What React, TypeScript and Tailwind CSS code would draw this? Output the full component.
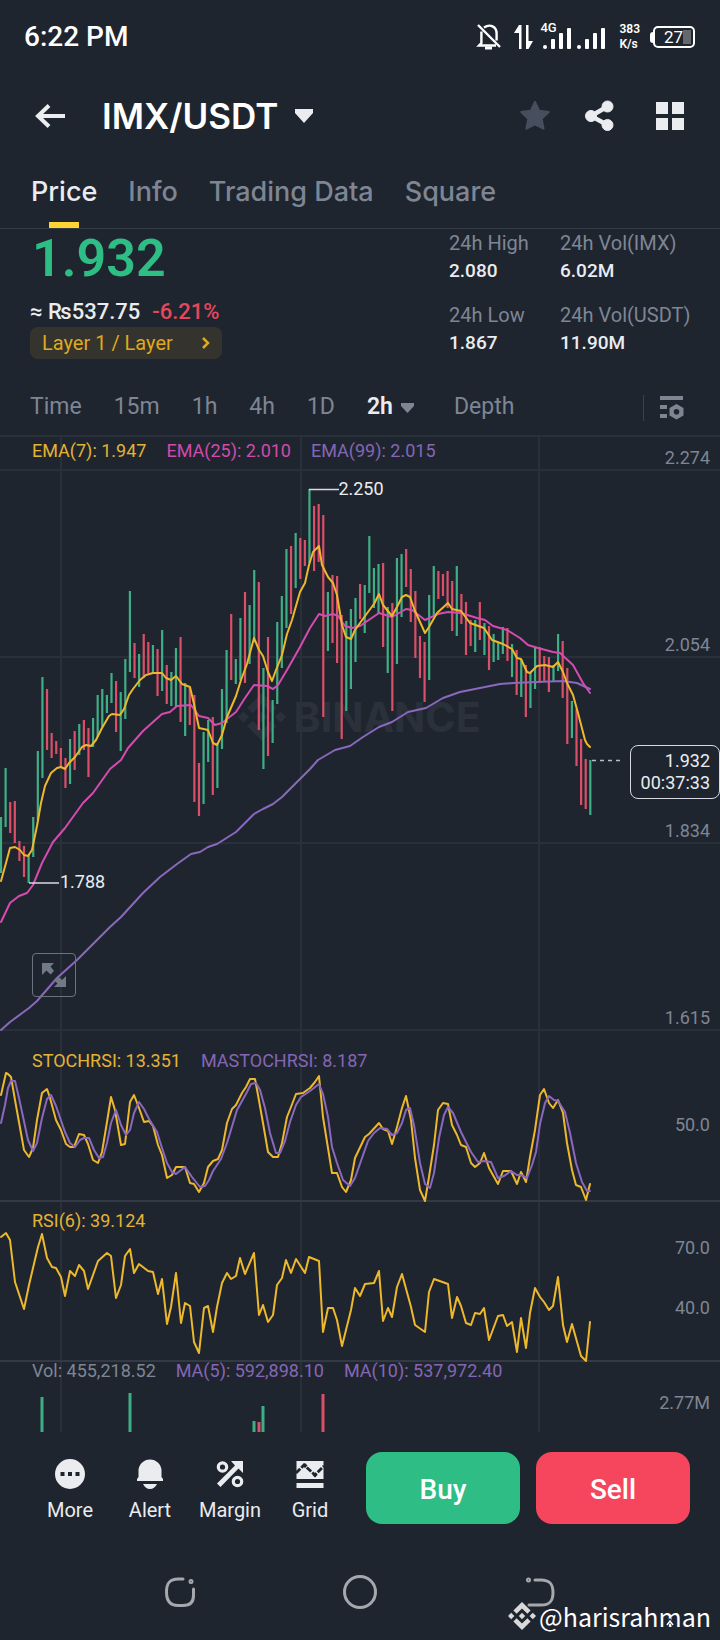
import React from "react";

const GREEN = "#3fae86";
const RED = "#db5068";
const YELLOW = "#edb82c";
const PINK = "#d64bb0";
const PURPLE = "#8a68bd";

type Candle = [high: number, low: number, up: 0 | 1];

const candles: Candle[] = [
  [817, 873, 1], [768, 827, 1], [802, 833, 0], [801, 843, 0], [841, 861, 0], [846, 877, 0], [855, 883, 1], [817, 857, 1],
  [751, 820, 1], [677, 778, 1], [689, 750, 0], [733, 758, 0], [741, 754, 0], [748, 767, 0], [758, 788, 0], [739, 784, 1],
  [731, 770, 0], [724, 755, 1], [720, 750, 0], [728, 777, 0], [718, 747, 1], [695, 737, 1], [689, 727, 1], [695, 713, 1],
  [673, 703, 1], [681, 732, 0], [692, 751, 1], [659, 719, 1], [591, 672, 1], [643, 678, 0], [654, 687, 1], [634, 678, 0],
  [642, 673, 0], [645, 673, 1], [649, 696, 0], [630, 691, 1], [665, 704, 0], [672, 706, 1], [648, 707, 1], [637, 722, 0],
  [683, 736, 1], [688, 725, 0], [695, 802, 0], [763, 816, 0], [732, 804, 1], [720, 762, 1], [717, 795, 0], [743, 788, 1],
  [689, 749, 1], [650, 723, 1], [614, 680, 0], [659, 684, 1], [618, 680, 1], [592, 683, 0], [605, 664, 1], [570, 638, 1],
  [582, 730, 0], [668, 769, 1], [637, 756, 0], [700, 743, 1], [622, 704, 1], [596, 668, 1], [549, 628, 1], [546, 614, 0],
  [533, 588, 1], [538, 579, 0], [540, 566, 0], [489, 563, 1], [506, 571, 0], [504, 562, 0], [515, 717, 0], [592, 651, 1],
  [575, 643, 0], [576, 663, 0], [615, 739, 0], [621, 711, 1], [609, 689, 1], [598, 662, 1], [584, 619, 0], [585, 633, 1],
  [536, 593, 1], [568, 608, 1], [564, 613, 1], [563, 647, 0], [607, 673, 1], [603, 711, 0], [558, 664, 1], [554, 617, 1],
  [549, 587, 0], [569, 622, 0], [591, 658, 0], [636, 678, 0], [642, 702, 0], [595, 680, 1], [566, 617, 1], [571, 599, 0],
  [574, 596, 0], [571, 608, 0], [581, 631, 0], [566, 636, 1], [594, 624, 0], [602, 655, 0], [620, 646, 0], [620, 652, 1],
  [602, 640, 0], [623, 655, 1], [626, 670, 0], [634, 662, 1], [642, 660, 1], [627, 654, 1], [628, 661, 0], [644, 677, 1],
  [650, 695, 0], [659, 697, 1], [665, 717, 0], [673, 708, 1], [648, 689, 1], [647, 683, 0], [656, 682, 0], [657, 692, 0],
  [665, 681, 1], [634, 671, 1], [641, 698, 0], [668, 744, 0], [701, 738, 1], [709, 766, 0], [739, 805, 0], [759, 809, 0],
  [760, 815, 1],
];

const ema7 =
  "1,881 6,863 10,848 15,847 20,850 24,855 28,856 32,850 37,826 41,803 45,786 51,773 57,768 61,767 65,769 69,763 75,757 82,747 86,745 91,746 96,740 102,728 109,716 112,714 120,715 124,709 129,695 133,689 140,680 146,675 153,673 162,673 166,678 171,680 176,676 182,684 190,687 194,704 199,728 208,730 213,743 217,745 222,735 227,717 236,696 241,680 247,664 254,638 259,650 263,656 268,672 272,681 276,670 282,655 287,634 292,620 300,592 305,583 309,565 313,552 319,546 322,565 328,577 333,583 337,595 342,625 346,637 351,639 355,630 360,623 368,612 374,604 379,594 383,605 392,616 397,607 402,597 406,595 410,597 415,611 425,633 429,627 437,613 448,603 452,609 461,611 470,623 484,628 492,640 503,644 512,649 517,658 521,659 527,672 530,673 537,666 545,665 553,667 558,662 563,672 567,683 573,695 578,713 585,740 587,744 590,747";
const ema25 =
  "1,922 10,903 19,896 27,893 33,885 42,863 53,842 65,828 83,803 93,793 110,769 121,760 128,748 143,731 162,714 170,712 177,706 191,705 199,716 208,718 215,725 222,723 236,712 245,698 254,685 267,686 273,689 278,685 287,670 300,647 310,628 319,614 325,616 333,614 338,616 345,626 352,628 360,626 379,613 392,617 406,609 412,610 425,620 438,614 448,612 461,613 477,618 485,620 493,626 507,630 520,638 528,645 538,648 553,652 560,653 573,665 583,683 590,693";
const ema99 =
  "1,1030 10,1022 29,1008 37,1001 57,978 77,960 93,944 110,927 121,917 143,893 160,877 177,864 191,854 200,852 208,847 217,844 236,832 254,814 263,809 273,804 282,797 300,779 310,769 318,760 335,750 350,746 363,737 379,727 392,722 408,712 426,708 443,698 460,692 480,688 500,684 513,683 537,682 563,681 577,683 590,689";
const stoch =
  "1,1095 6,1073 8,1074 11,1077 15,1100 24,1150 29,1157 33,1148 37,1120 42,1093 47,1089 50,1098 56,1120 61,1130 66,1144 70,1147 74,1147 79,1134 84,1135 88,1144 93,1160 98,1163 102,1152 107,1122 111,1097 115,1110 121,1145 125,1144 130,1102 134,1095 139,1108 144,1122 149,1121 153,1126 158,1145 162,1155 167,1178 172,1175 176,1167 185,1167 190,1183 194,1184 199,1192 204,1183 208,1167 213,1161 218,1159 222,1150 227,1123 232,1109 236,1105 242,1093 246,1087 250,1079 255,1079 258,1095 263,1123 268,1152 273,1157 278,1157 282,1143 287,1117 291,1107 296,1094 303,1093 310,1088 315,1082 319,1076 323,1117 332,1173 337,1173 342,1187 346,1192 351,1180 355,1158 365,1137 369,1134 379,1123 383,1129 388,1131 392,1144 397,1127 402,1108 406,1096 411,1120 415,1158 420,1190 425,1201 429,1177 434,1145 438,1110 443,1103 448,1104 452,1125 457,1135 461,1145 466,1147 471,1163 475,1167 480,1163 484,1153 489,1168 498,1184 503,1171 511,1171 517,1184 521,1172 526,1182 530,1157 535,1130 540,1095 544,1089 549,1103 553,1108 558,1100 563,1113 567,1143 572,1170 576,1185 581,1187 586,1200 590,1184";
const stochMa =
  "1,1123 5,1105 8,1088 11,1081 15,1081 19,1098 28,1140 33,1151 37,1143 42,1118 47,1099 51,1095 56,1106 65,1132 70,1143 75,1147 80,1140 84,1138 89,1138 94,1150 99,1158 103,1157 107,1143 111,1123 116,1110 121,1125 126,1135 130,1130 134,1113 139,1102 144,1109 149,1119 157,1132 162,1148 167,1163 172,1172 176,1174 185,1167 192,1177 200,1187 205,1186 209,1180 213,1171 221,1159 227,1143 237,1110 247,1092 251,1084 256,1083 260,1090 265,1108 270,1133 276,1153 280,1153 285,1141 290,1122 296,1105 301,1097 310,1091 319,1084 323,1094 328,1117 332,1147 337,1163 343,1180 350,1186 355,1178 362,1158 368,1141 374,1133 380,1128 387,1129 392,1135 397,1133 402,1123 406,1110 410,1108 414,1125 420,1163 425,1184 430,1188 434,1173 439,1138 444,1115 448,1107 453,1113 461,1132 471,1152 478,1162 484,1161 491,1162 498,1178 504,1176 511,1171 517,1175 521,1175 527,1178 532,1165 536,1152 540,1124 545,1103 549,1096 554,1100 558,1101 565,1112 570,1133 576,1163 582,1182 587,1191 590,1191";
const rsi =
  "1,1237 6,1233 10,1240 15,1282 19,1294 24,1309 29,1285 38,1247 42,1234 47,1258 52,1267 56,1268 61,1277 65,1296 70,1271 75,1276 79,1265 84,1271 88,1289 98,1261 107,1253 111,1256 116,1298 121,1285 125,1256 130,1249 134,1273 139,1264 148,1271 153,1272 158,1294 162,1279 167,1324 171,1307 176,1273 181,1323 185,1303 190,1306 194,1342 199,1353 204,1308 208,1306 213,1332 217,1307 222,1283 227,1273 231,1279 236,1276 240,1258 245,1274 254,1253 259,1315 263,1305 268,1322 273,1315 277,1285 282,1278 286,1260 291,1273 296,1259 305,1273 309,1257 319,1261 323,1332 328,1308 333,1308 337,1320 342,1346 351,1310 355,1288 360,1296 365,1284 374,1283 379,1271 383,1321 388,1308 392,1317 397,1287 402,1274 411,1307 415,1325 425,1332 429,1292 434,1279 448,1284 452,1318 457,1297 461,1306 466,1323 471,1325 475,1313 480,1314 484,1308 489,1340 498,1316 503,1315 507,1326 512,1322 517,1352 521,1318 526,1348 530,1313 535,1288 540,1297 544,1302 549,1310 553,1306 558,1277 563,1325 567,1342 572,1324 581,1356 586,1361 590,1322";

const volumes: [x: number, top: number, up: 0 | 1][] = [
  [42, 1397, 1], [130, 1393, 1], [254, 1421, 1], [259, 1422, 0], [263, 1406, 1], [323, 1394, 0],
];

function Line({ points, color }: { points: string; color: string }) {
  return (
    <polyline points={points} fill="none" stroke={color} strokeWidth={2} strokeLinejoin="round" strokeLinecap="round" vectorEffect="non-scaling-stroke" />
  );
}

function Plot({ top, height, rows = [], children }: { top: number; height: number; rows?: number[]; children: React.ReactNode }) {
  return (
    <svg viewBox={`0 ${top} 720 ${height}`} preserveAspectRatio="none" className="relative block h-full w-full overflow-visible" aria-hidden="true">
      <g stroke="#29303a" strokeWidth={2}>
        {[61, 301, 539].map((x) => (
          <line key={x} x1={x} x2={x} y1={top} y2={top + height} />
        ))}
        {rows.map((y) => (
          <line key={y} x1={0} x2={720} y1={y} y2={y} />
        ))}
      </g>
      {children}
    </svg>
  );
}

function Legend({ items, className = "" }: { items: [string, string][]; className?: string }) {
  return (
    <div className={`absolute left-8 flex gap-5 leading-6 whitespace-nowrap ${className}`}>
      {items.map(([text, color]) => (
        <span key={text} className={color}>{text}</span>
      ))}
    </div>
  );
}

function Axis({ children, className }: { children: string; className: string }) {
  return <span className={`absolute right-[10px] leading-6 text-[#7e8694] ${className}`}>{children}</span>;
}

function BinanceMark({ className }: { className: string }) {
  return (
    <svg viewBox="0 0 28 28" fill="currentColor" className={className} aria-hidden="true">
      <path d="M14 0 5.4 8.6l3.2 3.2L14 6.4l5.4 5.4 3.2-3.2zM14 28l-8.6-8.6 3.2-3.2 5.4 5.4 5.4-5.4 3.2 3.2zM14 10.8l3.2 3.2-3.2 3.2-3.2-3.2zM3.2 10.8 6.4 14l-3.2 3.2L0 14zM24.8 10.8 28 14l-3.2 3.2-3.2-3.2z" />
    </svg>
  );
}

function StatusBar() {
  return (
    <div className="flex h-[74px] items-center justify-between pr-[25px] pl-6 text-white">
      <span className="text-[28px] leading-9 font-medium">6:22 PM</span>
      <div className="flex items-center">
        <svg width="26" height="28" viewBox="0 0 26 28" fill="none" stroke="white" strokeWidth="2.4" aria-label="Silent">
          <path d="M8 4.6C14 .4 20.600 3.500 20.600 10.500v7M5.400 8.500v11.500L3 22.500h17M2 2l22 22" />
          <path d="M9 25h7" strokeWidth="3" />
        </svg>
        <svg width="20" height="26" viewBox="0 0 20 26" className="ml-3" fill="white" aria-hidden="true">
          <path d="M5 1h2.500v24H5V9H0zM12 1h2.500v16H19l-4.500 8H12z" />
        </svg>
        <div className="relative ml-2 flex h-7 items-end gap-[5px]">
          <span className="absolute -top-[3px] -left-[2px] text-[13px] leading-4 font-medium">4G</span>
          <svg width="30" height="26" viewBox="0 0 30 26" fill="white" aria-label="Signal">
            <rect x="1" y="20" width="4" height="4" rx="2" /><rect x="9" y="14" width="4" height="10" rx="1" /><rect x="17" y="8" width="4" height="16" rx="1" /><rect x="25" y="3" width="4" height="21" rx="1" />
          </svg>
          <svg width="30" height="26" viewBox="0 0 30 26" fill="white" aria-label="Signal">
            <rect x="0" y="20" width="4" height="4" rx="2" /><rect x="8" y="14" width="4" height="10" rx="1" /><rect x="16" y="8" width="4" height="16" rx="1" /><rect x="24" y="3" width="4" height="21" rx="1" />
          </svg>
        </div>
        <div className="ml-3 text-[12px] leading-[15px] font-semibold">
          <div>383</div>
          <div>K/s</div>
        </div>
        <div className="ml-[10px] flex items-center">
          <span className="h-[11px] w-[3px] rounded-l-sm bg-white" />
          <span className="flex h-[22px] w-[42px] items-center justify-end rounded-[5px] border-2 border-white pr-[2px] text-[17px] leading-5">
            27<span className="h-[14px] w-2 bg-[#646970]" />
          </span>
        </div>
      </div>
    </div>
  );
}

function Header() {
  return (
    <header className="flex h-[84px] items-center justify-between pr-9 pl-[35px]">
      <div className="flex items-center">
        <button aria-label="Back" className="mr-9">
          <svg width="31" height="24" viewBox="0 0 31 24" fill="none" stroke="#eaecef" strokeWidth="4" aria-hidden="true">
            <path d="M30 12H3M14 1.500 3 12l11 10.500" />
          </svg>
        </button>
        <button className="flex items-center gap-4 font-['Inter',sans-serif] text-[35px] leading-10 font-semibold text-white">
          IMX/USDT
          <svg width="20" height="14" viewBox="0 0 20 14" fill="#eaecef" aria-hidden="true"><path d="M1 0h18v4L10 14 1 4z" /></svg>
        </button>
      </div>
      <div className="flex items-center">
        <button aria-label="Favorite">
          <svg width="32" height="32" viewBox="0 0 24 24" fill="#474f5e" stroke="#474f5e" strokeWidth="1.500" strokeLinejoin="round" aria-hidden="true">
            <path d="m12 1.500 3.100 6.600 7.200.900-5.300 5 1.400 7.500-6.400-3.200-6.400 3.200L7 14 1.700 9l7.200-.900z" />
          </svg>
        </button>
        <button aria-label="Share" className="ml-[33px]">
          <svg width="31" height="32" viewBox="0 0 31 32" fill="#eaecef" stroke="#eaecef" aria-hidden="true">
            <path d="M23.500 6.500 7 16l16.500 9" fill="none" strokeWidth="4.500" />
            <circle cx="23.500" cy="6.500" r="5.500" /><circle cx="7" cy="16" r="5.500" /><circle cx="23.500" cy="25" r="5.500" />
          </svg>
        </button>
        <button aria-label="Layout" className="ml-[41px]">
          <svg width="28" height="28" viewBox="0 0 28 28" fill="#eaecef" aria-hidden="true">
            <path d="M0 0h12v12H0zM16 0h12v12H16zM0 16h12v12H0zM16 16h12v12H16z" />
          </svg>
        </button>
      </div>
    </header>
  );
}

function Stat({ label, value }: { label: string; value: string }) {
  return (
    <div className="text-[20px] leading-7 whitespace-nowrap">
      <dt className="text-[#7e8694]">{label}</dt>
      <dd className="text-[19px] font-medium text-[#eaecef]">{value}</dd>
    </div>
  );
}

function Action({ label, children }: { label: string; children: React.ReactNode }) {
  return (
    <button className="flex w-20 flex-col items-center gap-[7px] text-[20px] leading-7 text-[#eaecef]">
      <svg width="30" height="30" viewBox="0 0 30 30" fill="#eaecef" aria-hidden="true">{children}</svg>
      {label}
    </button>
  );
}

export default function App() {
  return (
    <div className="flex min-h-screen flex-col overflow-hidden bg-[#1f252f] font-['Roboto','Liberation_Sans',sans-serif]">
      <StatusBar />
      <Header />

      <nav className="flex h-[71px] gap-[31px] border-b border-[#353b46] pl-[31px] font-['Inter',sans-serif] text-[27px] font-medium text-[#7e8694]">
        <button className="relative pb-[2px] text-[#eaecef]">
          Price
          <span className="absolute bottom-0 left-1/2 h-[6px] w-[30px] -translate-x-1/2 bg-[#fcd535]" />
        </button>
        <button className="pb-[2px]">Info</button>
        <button className="pb-[2px]">Trading Data</button>
        <button className="pb-[2px]">Square</button>
      </nav>

      <section className="flex justify-between pr-8 pl-[30px]">
        <div>
          <p className="pl-0.5 text-[52px] leading-[60px] font-semibold text-[#2ebd85]">1.932</p>
          <p className="mt-2 flex gap-3 text-[22px] leading-[30px] font-medium">
            <span className="text-[#eaecef]">≈ ₨537.75</span>
            <span className="text-[#e5485d]">-6.21%</span>
          </p>
          <a href="#layer" className="flex h-8 w-48 items-center justify-between rounded-lg bg-[#35332e] pr-3 pl-3 text-[20px] text-[#dfa91d]">
            Layer 1 / Layer
            <svg width="8" height="12" viewBox="0 0 8 12" fill="none" stroke="currentColor" strokeWidth="2.500" aria-hidden="true"><path d="m1 1 5 5-5 5" /></svg>
          </a>
        </div>
        <dl className="grid grid-cols-[111px_128px] content-start gap-y-4">
          <Stat label="24h High" value="2.080" />
          <Stat label="24h Vol(IMX)" value="6.02M" />
          <Stat label="24h Low" value="1.867" />
          <Stat label="24h Vol(USDT)" value="11.90M" />
        </dl>
      </section>

      <div className="mt-5 flex h-[57px] items-center justify-between pr-9 pl-[30px] text-[23px] text-[#7e8694]">
        <div className="flex gap-8">
          <button>Time</button>
          <button>15m</button>
          <button>1h</button>
          <button>4h</button>
          <button>1D</button>
          <button className="flex items-center gap-2 font-semibold text-[#eaecef]">
            2h
            <svg width="13" height="10" viewBox="0 0 13 10" fill="#7e8694" aria-hidden="true"><path d="M0 0h13v3L6.500 10 0 3z" /></svg>
          </button>
          <button className="ml-2">Depth</button>
        </div>
        <div className="flex items-center gap-4">
          <span className="h-[26px] w-px bg-[#3a414d]" />
          <button aria-label="Chart settings">
            <svg width="24" height="25" viewBox="0 0 24 25" fill="#7e8694" aria-hidden="true">
              <path d="M0 1h23v4H0zM0 10h7v4H0zM0 19h7v4H0z" />
              <path fillRule="evenodd" d="m16.500 9 7 4v7.500l-7 4-7-4V13zm0 5a2.800 2.800 0 1 0 0 5.600 2.800 2.800 0 0 0 0-5.600z" />
            </svg>
          </button>
        </div>
      </div>

      <main className="text-[18px]">
        <section className="relative h-[608px]" aria-label="Price chart">
          <div className="absolute top-[257px] left-[33%] flex items-center gap-2 font-['Inter',sans-serif] text-[41px] leading-[48px] font-bold text-[#2b313b]">
            <BinanceMark className="size-12" />
            BINANCE
          </div>
          <Plot top={436} height={608} rows={[436, 470, 657, 843, 1030]}>
            {candles.map(([high, low, up], i) => (
              <line key={i} x1={1 + i * 4.604} x2={1 + i * 4.604} y1={high} y2={low} stroke={up ? GREEN : RED} strokeWidth={2.2} />
            ))}
            <Line points={ema99} color={PURPLE} />
            <Line points={ema25} color={PINK} />
            <Line points={ema7} color={YELLOW} />
            <path d="M309 489.500h30M29 883h30" stroke="#d6dae0" strokeWidth={1.500} fill="none" />
            <path d="M592 760.500h28" stroke="#b7bdc6" strokeWidth={1.500} strokeDasharray="4 4" fill="none" />
          </Plot>
          <Legend className="top-[3px]" items={[["EMA(7): 1.947", "text-[#e3b334]"], ["EMA(25): 2.010", "text-[#d04bac]"], ["EMA(99): 2.015", "text-[#8566b5]"]]} />
          <span className="absolute top-[41px] left-[47%] leading-6 text-[#eaecef]">2.250</span>
          <span className="absolute top-[434px] left-1/12 leading-6 text-[#eaecef]">1.788</span>
          <Axis className="top-[10px]">2.274</Axis>
          <Axis className="top-[197px]">2.054</Axis>
          <Axis className="top-[383px]">1.834</Axis>
          <Axis className="top-[570px]">1.615</Axis>
          <div className="absolute top-[309px] right-0 rounded-lg border border-[#d6dae0] bg-[#1f252f] py-1 pr-[9px] pl-[10px] text-right leading-[22px] text-[#eaecef]">
            1.932
            <br />
            00:37:33
          </div>
          <button aria-label="Expand chart" className="absolute top-[517px] left-8 flex size-11 items-center justify-center rounded border border-[#6b7380]">
            <svg width="26" height="26" viewBox="0 0 26 26" aria-hidden="true">
              <path d="M1 1h12L9.500 4.500 13 9l-3.500 3.500-4-4L1 13zM25 25H13l3.500-3.500-3-3L17 14l4 4 4-4z" fill="#727a88" />
            </svg>
          </button>
        </section>

        <section className="relative h-[158px] border-b-2 border-[#333a45]" aria-label="Stochastic RSI">
          <Plot top={1044} height={156}>
            <Line points={stoch} color={YELLOW} />
            <Line points={stochMa} color={PURPLE} />
          </Plot>
          <Legend className="top-[5px]" items={[["STOCHRSI: 13.351", "text-[#e3b334]"], ["MASTOCHRSI: 8.187", "text-[#8566b5]"]]} />
          <Axis className="top-[69px]">50.0</Axis>
        </section>

        <section className="relative h-[160px] border-b-2 border-[#333a45]" aria-label="RSI">
          <Plot top={1202} height={158}>
            <Line points={rsi} color={YELLOW} />
          </Plot>
          <Legend className="top-[7px]" items={[["RSI(6): 39.124", "text-[#e3b334]"]]} />
          <Axis className="top-[34px]">70.0</Axis>
          <Axis className="top-[94px]">40.0</Axis>
        </section>

        <section className="relative h-[70px]" aria-label="Volume">
          <Plot top={1362} height={70}>
            {volumes.map(([x, top, up]) => (
              <rect key={x} x={x - 1.5} y={top} width={3} height={1432 - top} fill={up ? GREEN : RED} />
            ))}
          </Plot>
          <Legend className="-top-[3px]" items={[["Vol: 455,218.52", "text-[#7e8694]"], ["MA(5): 592,898.10", "text-[#8566b5]"], ["MA(10): 537,972.40", "text-[#8566b5]"]]} />
          <Axis className="top-[29px]">2.77M</Axis>
        </section>
      </main>

      <div className="mt-5 flex items-start gap-4 pr-[30px] pl-[30px]">
        <div className="flex pt-[7px]">
          <Action label="More">
            <path fillRule="evenodd" d="M15 0a15 15 0 1 0 0 30 15 15 0 0 0 0-30zM5.500 13h4v4h-4zM13 13h4v4h-4zM20.500 13h4v4h-4z" />
          </Action>
          <Action label="Alert">
            <path d="M2 22v-2l1.500-2v-6a11.500 11.500 0 0 1 23 0v6l1.500 2v2zM8 25h14q-2.500 5-7 5t-7-5z" />
          </Action>
          <Action label="Margin">
            <path d="M16 2h12v12l-4.500-4.500L5.500 28 2 24.500 20 6.500z" />
            <g fill="#1f252f" stroke="#eaecef" strokeWidth="3.200"><circle cx="7.500" cy="8" r="4.200" /><circle cx="22.500" cy="22.500" r="4.200" /></g>
          </Action>
          <Action label="Grid">
            <path d="M1.500 2h27v18h-27zM1.500 24h27v5h-27z" />
            <path d="m1 14 8-8 11 10 9-9" fill="none" stroke="#1f252f" strokeWidth="2.800" strokeDasharray="6 1.500" />
            <path d="M7.500 6.500 10 4l2.500 2.500L10 9zM17.500 16l2.500-2.500 2.500 2.500-2.500 2.500z" fill="#1f252f" />
          </Action>
        </div>
        <div className="flex flex-1 gap-4 text-[28px] font-medium text-white">
          <button className="h-[72px] flex-1 rounded-2xl bg-[#2ebd85] pt-1">Buy</button>
          <button className="h-[72px] flex-1 rounded-2xl bg-[#f6465d] pt-1">Sell</button>
        </div>
      </div>

      <footer className="relative flex flex-1 items-start justify-center gap-[146px] pt-[50px] pb-5">
        <button aria-label="Recent apps">
          <svg width="34" height="36" viewBox="0 0 34 36" fill="none" stroke="#a5a8ad" strokeWidth="3" strokeLinecap="round" aria-hidden="true">
            <path d="M20 5h-5C7 5 3.500 9 3.500 18S7 31.500 15 31.500h5c7 0 10.500-3 10.500-10V15" />
            <circle cx="28" cy="7.500" r="1" />
          </svg>
        </button>
        <button aria-label="Home">
          <svg width="34" height="36" viewBox="0 0 34 36" fill="none" stroke="#a5a8ad" strokeWidth="3" aria-hidden="true"><circle cx="17" cy="18" r="15.500" /></svg>
        </button>
        <button aria-label="Back to previous">
          <svg width="34" height="36" viewBox="0 0 34 36" fill="none" stroke="#a5a8ad" strokeWidth="3" strokeLinecap="round" aria-hidden="true">
            <path d="M12 6h6c9 0 12 4 12 12.500S27 31 18 31H6" />
            <circle cx="5.500" cy="6" r="1" />
          </svg>
        </button>
        <div className="absolute right-[9px] bottom-[6px] flex items-center gap-[3px] font-['Noto_Sans_CJK_SC',sans-serif] text-[25px] leading-9 text-white">
          <BinanceMark className="size-7 text-[#d9d9d9]" />
          @harisrahman
          <svg width="10" height="8" viewBox="0 0 10 8" className="absolute right-[36px] bottom-[8px]" fill="none" aria-hidden="true">
            <path d="m1.500 7 3.500-4.500L8.500 7" stroke="#1f252f" strokeWidth="3" />
            <path d="m2 7 3-4 3 4" stroke="white" strokeWidth="1.500" />
          </svg>
        </div>
      </footer>
    </div>
  );
}
